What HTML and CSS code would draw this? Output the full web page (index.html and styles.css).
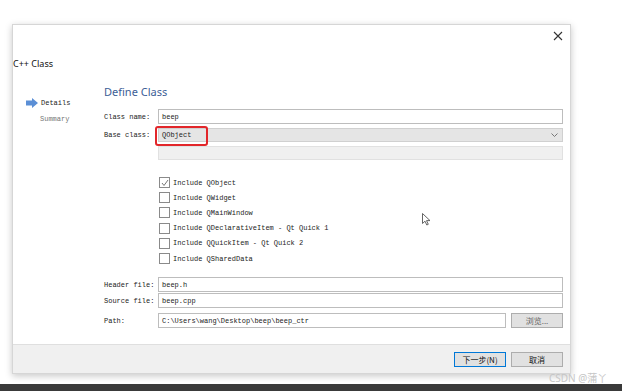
FILE: index.html
```html
<!DOCTYPE html>
<html lang="zh-CN">
<head>
    <meta charset="UTF-8">
    <meta name="viewport" content="width=device-width, initial-scale=1.0">
    <title>C++ Class</title>
    <link rel="stylesheet" href="styles.css">
</head>
<body>
    <div class="screen">
        <div class="stage">
            <div class="dialog">
                <div class="titlebar">
                    <svg class="close" width="10" height="10" viewBox="0 0 10 10"><path d="M1 1L9 9M9 1L1 9" stroke="#333" stroke-width="1.1" fill="none"/></svg>
                </div>
                <div class="wizard-title">C++ Class</div>
                <div class="content">
                    <div class="sidebar">
                        <div class="side-item current">
                            <svg class="arrow" width="12" height="10" viewBox="0 0 12 10"><path d="M0 2.5H6V0L12 5L6 10V7.5H0Z" fill="#5b8fd6"/></svg>
                            Details
                        </div>
                        <div class="side-item">Summary</div>
                    </div>
                    <div class="main">
                        <h2 class="page-title">Define Class</h2>
                        <div class="form">
                            <label>Class name:</label>
                            <div class="field">beep</div>
                            <label>Base class:</label>
                            <div class="combo">
                                QObject
                                <svg class="chev" width="7" height="4" viewBox="0 0 7 4"><path d="M0.5 0.5L3.5 3.5L6.5 0.5" stroke="#777" fill="none"/></svg>
                                <span class="mark"></span>
                            </div>
                            <span></span>
                            <div class="field disabled"></div>
                        </div>
                        <div class="checks">
                            <div class="check"><span class="box on"><svg width="8" height="8" viewBox="0 0 8 8"><path d="M1 4L3 6.5L7 1" stroke="#777" stroke-width="1" fill="none"/></svg></span>Include QObject</div>
                            <div class="check"><span class="box"></span>Include QWidget</div>
                            <div class="check"><span class="box"></span>Include QMainWindow</div>
                            <div class="check"><span class="box"></span>Include QDeclarativeItem - Qt Quick 1</div>
                            <div class="check"><span class="box"></span>Include QQuickItem - Qt Quick 2</div>
                            <div class="check"><span class="box"></span>Include QSharedData</div>
                        </div>
                        <div class="form files">
                            <label>Header file:</label>
                            <div class="field">beep.h</div>
                            <label>Source file:</label>
                            <div class="field">beep.cpp</div>
                            <label class="path-label">Path:</label>
                            <div class="path-row">
                                <div class="field">C:\Users\wang\Desktop\beep\beep_ctr</div>
                                <button class="btn browse">浏览...</button>
                            </div>
                        </div>
                    </div>
                </div>
                <div class="footer">
                    <button class="btn default">下一步(N)</button>
                    <button class="btn">取消</button>
                </div>
            </div>
        </div>
        <div class="taskbar"></div>
    </div>
    <svg class="cursor" width="9" height="13" viewBox="0 0 9 13"><path d="M0.5 0.5V10.5L3 8.2L4.8 12L6.3 11.3L4.5 7.6H8Z" fill="#fff" stroke="#555" stroke-width="0.9"/></svg>
    <div class="watermark">CSDN @蒲丫</div>
</body>
</html>
```

FILE: styles.css
```css
body {
    margin: 0;
    background-color: #fff;
    font-family: "Liberation Mono", "Noto Sans CJK SC", monospace;
    width: 622px;
    height: 391px;
    overflow: hidden;
    position: relative;
}
.screen {
    display: flex;
    flex-direction: column;
    height: 391px;
}
.stage {
    flex: 1;
    padding: 24px 0 0 12px;
}
.dialog {
    width: 557px;
    height: 348px;
    background-color: #fff;
    border: 1px solid #d6d6d6;
    box-shadow: 0 2px 7px rgba(0, 0, 0, 0.22);
    display: flex;
    flex-direction: column;
}
.titlebar {
    height: 22px;
    display: flex;
    justify-content: flex-end;
    align-items: center;
    padding-right: 7px;
}
.wizard-title {
    font-family: "Noto Sans", "Open Sans", sans-serif;
    font-size: 9px;
    color: #111;
    height: 14px;
    line-height: 14px;
    margin-top: 10px;
}
.content {
    display: flex;
    flex: 1;
}
.sidebar {
    width: 91px;
    padding-top: 24px;
}
.side-item {
    display: flex;
    align-items: center;
    height: 16px;
    padding-left: 27px;
    font-size: 7px;
    color: #777;
}
.side-item.current {
    color: #222;
    padding-left: 13px;
}
.arrow {
    margin-right: 3px;
}
.main {
    flex: 1;
    padding-right: 7px;
}
.page-title {
    margin: 13px 0 0;
    font-family: "Noto Sans", "Open Sans", sans-serif;
    font-weight: normal;
    font-size: 11px;
    line-height: 16px;
    color: #3c5e96;
}
.form {
    display: grid;
    grid-template-columns: 54px 1fr;
    row-gap: 4px;
    margin-top: 9px;
    font-size: 7px;
    color: #222;
}
.form label {
    display: flex;
    align-items: center;
    white-space: pre;
}
.field {
    height: 13px;
    border: 1px solid #bdbdbd;
    padding-left: 3px;
    display: flex;
    align-items: center;
    background-color: #fff;
}
.field.disabled {
    height: 12px;
    background-color: #f0f0f0;
    border-color: #e1e1e1;
}
.combo {
    position: relative;
    height: 12px;
    border: 1px solid #d0d0d0;
    background-color: #e5e5e5;
    padding-left: 3px;
    display: flex;
    align-items: center;
}
.chev {
    margin-left: auto;
    margin-right: 4px;
}
.mark {
    position: absolute;
    left: -4px;
    top: -3px;
    width: 49px;
    height: 16px;
    border: 2px solid #e2262a;
    border-radius: 3px;
}
.checks {
    margin: 15px 0 0 55px;
    font-size: 7px;
    color: #222;
}
.check {
    height: 15.2px;
    display: flex;
    align-items: center;
}
.box {
    width: 9px;
    height: 9px;
    border: 1px solid #8a8a8a;
    margin-right: 3px;
    display: flex;
    align-items: center;
    justify-content: center;
}
.files {
    margin-top: 11px;
    row-gap: 1px;
}
.files .path-label {
    margin-top: 4px;
}
.path-row {
    display: flex;
    gap: 5px;
    margin-top: 4px;
}
.path-row .field {
    flex: 1;
}
.btn {
    width: 52px;
    height: 15px;
    padding: 0;
    border: 1px solid #adadad;
    background-color: #e1e1e1;
    font-family: "Noto Sans CJK SC", sans-serif;
    font-size: 8px;
    color: #111;
    display: flex;
    align-items: center;
    justify-content: center;
}
.browse {
    color: #666;
}
.footer {
    height: 28px;
    border-top: 1px solid #dfdfdf;
    background-color: #f0f0f0;
    display: flex;
    justify-content: flex-end;
    align-items: center;
    gap: 5px;
    padding-right: 7px;
}
.btn.default {
    border-color: #0078d7;
}
.taskbar {
    height: 7px;
    background-color: #3a3a3a;
}
.cursor {
    position: absolute;
    left: 422px;
    top: 213px;
}
.watermark {
    position: absolute;
    left: 549px;
    top: 370px;
    font-family: "Noto Sans", "Noto Sans CJK SC", sans-serif;
    font-size: 10px;
    color: #c6c6c6;
}
```
